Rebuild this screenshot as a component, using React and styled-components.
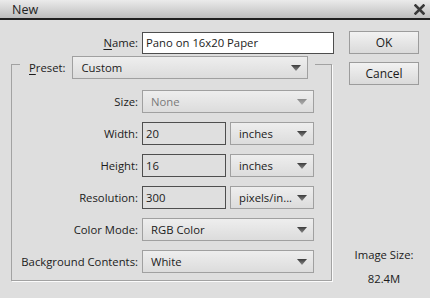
import React from "react";
import styled, { createGlobalStyle } from "styled-components";

const GlobalStyle = createGlobalStyle`
  html, body {
    margin: 0;
    padding: 0;
    background: #dedede;
  }
  body {
    font-family: "Open Sans", "Noto Sans", sans-serif;
    font-size: 11.3px;
    color: #1b1b1b;
  }
`;

const Window = styled.div`
  width: 430px;
  height: 298px;
  display: flex;
  flex-direction: column;
  overflow: hidden;
  background: #dedede;
`;

const TitleBar = styled.div`
  flex: none;
  height: 18px;
  display: flex;
  align-items: center;
  justify-content: space-between;
  padding: 0 5px 0 12px;
  background: linear-gradient(#ebebeb, #bdbdbd);
  border-bottom: 2px solid #1f1f1f;
  font-size: 12.5px;
  color: #222;
`;

const Content = styled.div`
  flex: 1;
  display: flex;
  padding: 11px 0 0 11px;
`;

const Main = styled.div`
  width: 323px;
  display: flex;
  flex-direction: column;
`;

const Side = styled.div`
  width: 70px;
  margin-left: 15px;
  display: flex;
  flex-direction: column;
  gap: 8px;
`;

const NameRow = styled.div`
  display: grid;
  grid-template-columns: 127px 192px;
  column-gap: 4px;
  align-items: center;
  height: 22px;
`;

const Label = styled.label`
  text-align: right;
  white-space: nowrap;
  line-height: 23px;

  u {
    text-decoration: underline;
    text-underline-offset: 2px;
  }
`;

const Field = styled.div`
  box-sizing: border-box;
  height: ${(p) => (p.$tall ? "22px" : "23px")};
  width: ${(p) => p.$width || "100%"};
  padding-left: 3px;
  display: flex;
  align-items: center;
  border: 1px solid #4e4e4e;
  background: ${(p) => (p.$white ? "#ffffff" : "#dfdfdf")};
  white-space: nowrap;
`;

const Group = styled.fieldset`
  box-sizing: border-box;
  width: 321px;
  min-width: 0;
  margin: 3px 0 0 0;
  padding: 0 17px 7px 0;
  border: 1px solid #a2a2a2;
  box-shadow: 1px 1px 0 #fbfbfb;
`;

const Legend = styled.legend`
  height: 16px;
  margin-left: 8px;
  padding: 0 7px 0 9px;
  display: flex;
  align-items: flex-start;
  gap: 7px;
`;

const Rows = styled.div`
  display: grid;
  grid-template-columns: 126px 172px;
  grid-auto-rows: 23px;
  column-gap: 4px;
  row-gap: 9px;
  padding-top: 18px;
  align-items: center;
`;

const Pair = styled.div`
  display: flex;
  gap: 4px;
`;

const SelectBox = styled.div`
  box-sizing: border-box;
  height: 23px;
  width: ${(p) => p.$width || "100%"};
  padding: 0 6px 0 8px;
  display: flex;
  align-items: center;
  justify-content: space-between;
  border: 1px solid #a0a0a0;
  background: linear-gradient(#eeeeee, #dcdcdc);
  color: ${(p) => (p.$disabled ? "#7a7a7a" : "#1b1b1b")};
  white-space: nowrap;

  svg {
    flex: none;
    margin-top: 1px;
  }
`;

const Button = styled.button`
  box-sizing: border-box;
  height: 23px;
  width: 70px;
  padding: 0;
  border: 1px solid #9c9c9c;
  background: linear-gradient(#f2f2f2, #dadada);
  font-family: inherit;
  font-size: 12px;
  color: #1b1b1b;
`;

const ImageSize = styled.div`
  margin-top: auto;
  padding-bottom: 11px;
  display: flex;
  flex-direction: column;
  align-items: center;
  gap: 8px;
  line-height: 16px;
`;

const Arrow = ({ disabled }) => (
  <svg width="10" height="6" viewBox="0 0 10 6">
    <defs>
      <linearGradient id={disabled ? "ad" : "ae"} x1="0" y1="0" x2="0" y2="1">
        <stop offset="0" stopColor={disabled ? "#8a8a8a" : "#3c3c3c"} />
        <stop offset="1" stopColor={disabled ? "#b0b0b0" : "#8a8a8a"} />
      </linearGradient>
    </defs>
    <polygon points="0,0 10,0 5,6" fill={`url(#${disabled ? "ad" : "ae"})`} />
  </svg>
);

const Select = ({ value, width, disabled }) => (
  <SelectBox $width={width} $disabled={disabled}>
    <span>{value}</span>
    <Arrow disabled={disabled} />
  </SelectBox>
);

const CloseIcon = () => (
  <svg width="11" height="11" viewBox="0 0 11 11">
    <path d="M1.5 1.5 L9.5 9.5 M9.5 1.5 L1.5 9.5" stroke="#383838" strokeWidth="2.6" strokeLinecap="square" />
  </svg>
);

const rows = [
  { label: "Width:", value: "20", unit: "inches" },
  { label: "Height:", value: "16", unit: "inches" },
  { label: "Resolution:", value: "300", unit: "pixels/in..." },
];

export default function App() {
  return (
    <>
      <GlobalStyle />
      <Window>
        <TitleBar>
          <span>New</span>
          <CloseIcon />
        </TitleBar>
        <Content>
          <Main>
            <NameRow>
              <Label>
                <u>N</u>ame:
              </Label>
              <Field $white $tall>
                Pano on 16x20 Paper
              </Field>
            </NameRow>
            <Group>
              <Legend>
                <Label>
                  <u>P</u>reset:
                </Label>
                <Select value="Custom" width="236px" />
              </Legend>
              <Rows>
                <Label>Size:</Label>
                <Select value="None" disabled />
                {rows.map((r) => (
                  <React.Fragment key={r.label}>
                    <Label>{r.label}</Label>
                    <Pair>
                      <Field $width="84px">{r.value}</Field>
                      <Select value={r.unit} width="84px" />
                    </Pair>
                  </React.Fragment>
                ))}
                <Label>Color Mode:</Label>
                <Select value="RGB Color" />
                <Label>Background Contents:</Label>
                <Select value="White" />
              </Rows>
            </Group>
          </Main>
          <Side>
            <Button>OK</Button>
            <Button>Cancel</Button>
            <ImageSize>
              <span>Image Size:</span>
              <span>82.4M</span>
            </ImageSize>
          </Side>
        </Content>
      </Window>
    </>
  );
}
